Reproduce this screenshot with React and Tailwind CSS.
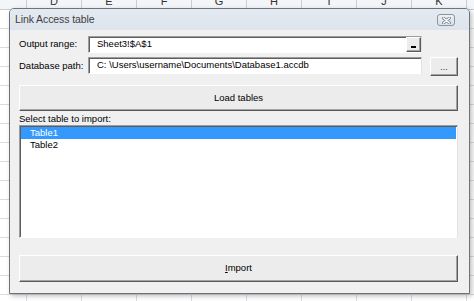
import React from 'react';

const cols = ['D', 'E', 'F', 'G', 'H', 'I', 'J', 'K'];
const rows = Array.from({ length: 16 });

function Sheet() {
  return (
    <div className="w-[474px] h-[301px] bg-white">
      <div className="h-[10px] flex overflow-hidden bg-[#f3f5f8] border-b border-[#c8ced6]">
        <div className="w-[27px] shrink-0 border-r border-[#c8ced6]" />
        {cols.map((c) => (
          <div key={c} className="w-[55px] shrink-0 border-r border-[#c8ced6] flex justify-center">
            <span className="text-[11px] leading-[11px] -mt-[4px] text-[#333]">{c}</span>
          </div>
        ))}
      </div>
      {rows.map((_, i) => (
        <div key={i} className="h-[19px] flex border-b border-[#dadcdd]">
          <div className="w-[27px] shrink-0 border-r border-[#dadcdd]" />
          {cols.map((c) => (
            <div key={c} className="w-[55px] shrink-0 border-r border-[#dadcdd]" />
          ))}
        </div>
      ))}
    </div>
  );
}

const sunken =
  'border border-t-[#9c9c9c] border-l-[#9c9c9c] border-r-[#e2e2e2] border-b-[#ffffff] shadow-[inset_1px_1px_0_#5e5e5e]';
const raised =
  'border border-t-[#ffffff] border-l-[#ffffff] border-r-[#5a5a5a] border-b-[#5a5a5a] shadow-[inset_-1px_-1px_0_#a3a3a3] bg-[#ececec]';

export default function App() {
  return (
    <div className="relative w-[474px] h-[301px] overflow-hidden font-['Liberation_Sans',Arial,sans-serif] text-[9.5px] text-black">
      <Sheet />

      <div className="absolute left-[9px] top-[8px] w-[461px] h-[286px] rounded-t-[5px] border border-[#6c737b] bg-[#f0f0f0] shadow-[2px_2px_5px_rgba(0,0,0,0.25)] flex flex-col">
        {/* title bar */}
        <div className="h-[21px] shrink-0 rounded-t-[4px] bg-gradient-to-b from-[#e4eaf1] to-[#dde4ec] flex items-center justify-between pl-[5px] pr-[14px]">
          <span className="text-[10.5px] text-[#3e3e3e] tracking-[-0.1px]">Link Access table</span>
          <div className="w-[18px] h-[12px] mt-[1px] rounded-[3px] border border-[#8c949e] bg-gradient-to-b from-[#edf1f5] to-[#d9e0e8] flex items-center justify-center">
            <svg width="9" height="7" viewBox="0 0 9 7">
              <path d="M1.5 1 L7.5 6 M7.5 1 L1.5 6" stroke="#7d8590" strokeWidth="3" strokeLinecap="round" />
              <path d="M1.5 1 L7.5 6 M7.5 1 L1.5 6" stroke="#ffffff" strokeWidth="1.4" strokeLinecap="round" />
            </svg>
          </div>
        </div>

        {/* body */}
        <div className="flex-1 flex flex-col pl-[9px] pr-[11px] pt-[6px]">
          <div className="h-[17px] flex items-center">
            <span className="w-[69px] shrink-0">Output range:</span>
            <div className={`w-[334px] h-[17px] bg-white flex items-center justify-between ${sunken}`}>
              <span className="pl-[8px]">Sheet3!$A$1</span>
              <div className={`w-[15px] h-[15px] flex items-end justify-center pb-[3px] ${raised}`}>
                <div className="w-[5px] h-[2px] bg-black" />
              </div>
            </div>
          </div>

          <div className="h-[19px] mt-[4px] flex items-start">
            <span className="w-[69px] shrink-0 leading-[17px]">Database path:</span>
            <div className={`w-[334px] h-[17px] bg-white flex items-center ${sunken}`}>
              <span className="pl-[8px]">C: \Users\username\Documents\Database1.accdb</span>
            </div>
            <div className={`ml-auto w-[28px] h-[19px] flex items-center justify-center pt-[3px] ${raised}`}>
              <span className="text-[9px] text-[#333]">...</span>
            </div>
          </div>

          <div className={`mt-[9px] h-[26px] flex items-center justify-center ${raised}`}>
            Load tables
          </div>

          <div className="h-[13px] mt-[1px] leading-[13px]">Select table to import:</div>

          <div className={`h-[113px] bg-white p-[1px] ${sunken}`}>
            <div className="h-[12px] bg-[#3399ff] text-white pl-[9px] leading-[12px]">Table1</div>
            <div className="h-[12px] pl-[9px] leading-[12px]">Table2</div>
          </div>

          <div className={`mt-[17px] h-[27px] flex items-center justify-center ${raised}`}>
            <span><span className="underline">I</span>mport</span>
          </div>
        </div>
      </div>
    </div>
  );
}
